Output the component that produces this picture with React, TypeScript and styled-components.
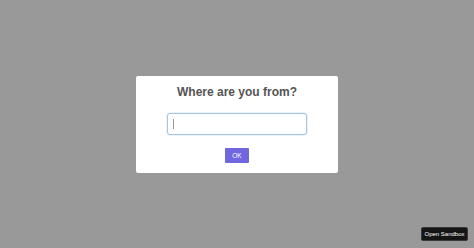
import styled, { createGlobalStyle } from 'styled-components'

const Global = createGlobalStyle`
  html, body {
    margin: 0;
    padding: 0;
  }
  body {
    font-family: "Liberation Sans", Arial, sans-serif;
    background: #999999;
  }
`

const Overlay = styled.div`
  width: 474px;
  height: 248px;
  display: flex;
  align-items: center;
  justify-content: center;
  background: #999999;
`

const Modal = styled.div`
  width: 202px;
  height: 97px;
  box-sizing: border-box;
  background: #ffffff;
  border-radius: 2px;
  display: flex;
  flex-direction: column;
  align-items: center;
  padding-top: 9px;
`

const Title = styled.h2`
  margin: 0;
  font-size: 12px;
  font-weight: bold;
  color: #545454;
  line-height: 15px;
`

const FieldWrap = styled.div`
  position: relative;
  margin-top: 13px;
  display: flex;
`

const Field = styled.input`
  width: 140px;
  height: 22px;
  box-sizing: border-box;
  border: 1px solid #a6c3e0;
  border-radius: 3px;
  box-shadow: 0 0 2px rgba(100, 150, 200, 0.4);
  outline: none;
  padding: 0 6px;
  font-size: 10px;
  font-family: inherit;
  color: #545454;
`

const Caret = styled.span`
  position: absolute;
  left: 6px;
  top: 6px;
  width: 1px;
  height: 10px;
  background: #999;
`

const OkButton = styled.button`
  margin-top: 13px;
  width: 24px;
  height: 15px;
  padding: 0;
  border: none;
  border-radius: 1px;
  background: #7066e0;
  color: #ffffff;
  font-family: inherit;
  font-size: 6.5px;
  cursor: pointer;
`

const SandboxButton = styled.button`
  position: fixed;
  right: 6px;
  bottom: 7px;
  width: 47px;
  height: 14px;
  padding: 0;
  background: #151515;
  color: #ffffff;
  border: 1px solid #3a3a3a;
  border-radius: 2px;
  font-family: inherit;
  font-size: 6px;
`

export default function App() {
  return (
    <>
      <Global />
      <Overlay>
        <Modal>
          <Title>Where are you from?</Title>
          <FieldWrap>
            <Field type="text" />
            <Caret />
          </FieldWrap>
          <OkButton>OK</OkButton>
        </Modal>
      </Overlay>
      <SandboxButton>Open Sandbox</SandboxButton>
    </>
  )
}
